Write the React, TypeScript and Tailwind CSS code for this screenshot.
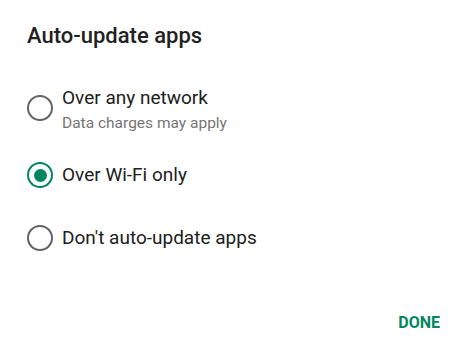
import React from "react";

function Radio({ checked }: { checked?: boolean }) {
  return (
    <div
      className={
        checked
          ? "flex h-[26px] w-[26px] shrink-0 items-center justify-center rounded-full border-[2.5px] border-[#01875f]"
          : "flex h-[26px] w-[26px] shrink-0 items-center justify-center rounded-full border-[2.5px] border-[#646464]"
      }
    >
      {checked && <div className="h-[13px] w-[13px] rounded-full bg-[#01875f]" />}
    </div>
  );
}

export default function App() {
  return (
    <div
      className="flex h-[353px] w-[474px] flex-col bg-white px-[27px] pt-[22px] pb-[20px]"
      style={{ fontFamily: "Roboto, 'Noto Sans', sans-serif" }}
    >
      <div className="text-[22px] leading-[28px] font-medium text-[#212121]">Auto-update apps</div>

      <div className="mt-[36px] flex items-start">
        <div className="mt-[9px]">
          <Radio />
        </div>
        <div className="ml-[9px] flex flex-col">
          <div className="text-[19px] leading-[24px] text-[#202020]">Over any network</div>
          <div className="mt-[3px] text-[15.5px] leading-[20px] text-[#757575]">Data charges may apply</div>
        </div>
      </div>

      <div className="mt-[29px] flex items-center">
        <Radio checked />
        <div className="ml-[9px] text-[19px] leading-[24px] text-[#202020]">Over Wi-Fi only</div>
      </div>

      <div className="mt-[37px] flex items-center">
        <Radio />
        <div className="ml-[9px] text-[19px] leading-[24px] text-[#202020]">Don't auto-update apps</div>
      </div>

      <div className="mt-auto mr-[7px] self-end text-[16px] leading-[20px] font-bold text-[#01875f]">DONE</div>
    </div>
  );
}
